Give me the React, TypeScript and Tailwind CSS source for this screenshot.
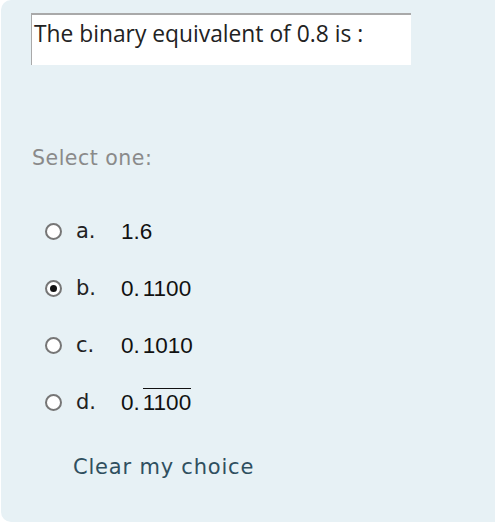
import React from "react";

const Radio = ({ checked }: { checked?: boolean }) => (
  <span className="flex h-[17px] w-[17px] shrink-0 items-center justify-center rounded-full border-2 border-[#767676] bg-white">
    {checked && <span className="h-[7px] w-[7px] rounded-full bg-[#111]" />}
  </span>
);

const opts = [
  { l: "a.", v: "1.6" },
  { l: "b.", v: "1100", checked: true },
  { l: "c.", v: "1010" },
  { l: "d.", v: "bar" },
];

export default function App() {
  return (
    <div className="h-[524px] w-[495px] overflow-hidden bg-white">
      <div className="ml-[1px] flex h-[522px] w-[520px] flex-col rounded-l-[10px] bg-[#e7f1f5]">
        <div className="ml-[30px] mt-[13px] h-[52px] w-[380px] border-l border-t-2 border-[#a9a9a9] bg-white pl-[2px] pt-[3px] font-['Open_Sans',sans-serif] text-[22.8px] leading-[31px] text-[#222]">
          The binary equivalent of 0.8 is :
        </div>
        <div className="ml-[31px] mt-[80px] font-['DejaVu_Sans',sans-serif] text-[20.5px] leading-[26px] tracking-[0.5px] text-[#8a8a8a]">
          Select one:
        </div>
        <div className="mt-[32px] flex flex-col">
          {opts.map((o) => (
            <div key={o.l} className="flex h-[57px] items-center pl-[44px]">
              <Radio checked={o.checked} />
              <span className="ml-[14px] w-[45px] font-['DejaVu_Sans',sans-serif] text-[21px] text-[#222]">
                {o.l}
              </span>
              <span className="font-['Liberation_Sans',sans-serif] text-[22.5px] text-[#111]">
                {o.v === "1.6" ? (
                  o.v
                ) : (
                  <>
                    0.
                    <span className={"ml-[3px] " + (o.v === "bar" ? "border-t border-[#111] pt-[1px]" : "")}>
                      {o.v === "bar" ? "1100" : o.v}
                    </span>
                  </>
                )}
              </span>
            </div>
          ))}
        </div>
        <div className="ml-[72px] mt-[23px] font-['DejaVu_Sans',sans-serif] text-[21px] leading-[26px] tracking-[0.8px] text-[#2f4f5f]">
          Clear my choice
        </div>
      </div>
    </div>
  );
}
